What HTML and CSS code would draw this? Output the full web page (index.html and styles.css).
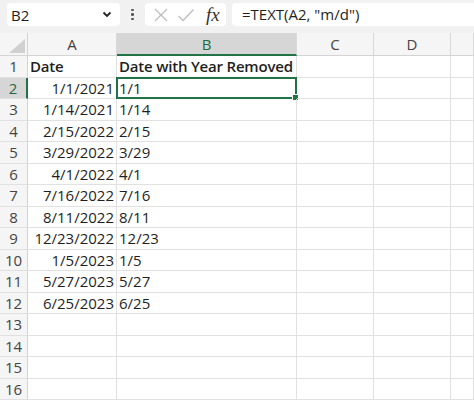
FILE: index.html
```html
<!DOCTYPE html>
<html lang="en">
<head>
  <meta charset="UTF-8">
  <title>Date with Year Removed</title>
  <link rel="stylesheet" href="styles.css">
</head>
<body>
  <div class="toolbar">
    <div class="name-box">
      <span>B2</span>
      <svg class="chevron" width="10" height="7" viewBox="0 0 10 7"><path d="M1.5 1.5 L5 5 L8.5 1.5" fill="none" stroke="#222" stroke-width="1.8"/></svg>
    </div>
    <div class="dots"><i></i><i></i><i></i></div>
    <div class="fx-box">
      <svg width="16" height="16" viewBox="0 0 16 16"><path d="M2 2 L14 14 M14 2 L2 14" stroke="#bdbdbd" stroke-width="1.3" fill="none"/></svg>
      <svg width="18" height="16" viewBox="0 0 18 16"><path d="M1.5 9 L6 13.5 L16.5 2.5" stroke="#bdbdbd" stroke-width="1.3" fill="none"/></svg>
      <span class="fx">fx</span>
    </div>
    <div class="formula">=TEXT(A2, "m/d")</div>
  </div>

  <div class="sheet">
    <div class="corner"><svg width="22" height="18" viewBox="0 0 22 18"><path d="M20 2 L20 16 L4 16 Z" fill="#d0d0d0"/></svg></div>
    <div class="col-head">A</div>
    <div class="col-head active">B</div>
    <div class="col-head">C</div>
    <div class="col-head">D</div>
    <div class="col-head"></div>

    <div class="row-head">1</div>
    <div class="cell bold">Date</div>
    <div class="cell bold">Date with Year Removed</div>
    <div class="cell"></div><div class="cell"></div><div class="cell"></div>

    <div class="row-head active">2</div>
    <div class="cell num">1/1/2021</div>
    <div class="cell selected">1/1<span class="handle"></span></div>
    <div class="cell"></div><div class="cell"></div><div class="cell"></div>

    <div class="row-head">3</div>
    <div class="cell num">1/14/2021</div>
    <div class="cell">1/14</div>
    <div class="cell"></div><div class="cell"></div><div class="cell"></div>

    <div class="row-head">4</div>
    <div class="cell num">2/15/2022</div>
    <div class="cell">2/15</div>
    <div class="cell"></div><div class="cell"></div><div class="cell"></div>

    <div class="row-head">5</div>
    <div class="cell num">3/29/2022</div>
    <div class="cell">3/29</div>
    <div class="cell"></div><div class="cell"></div><div class="cell"></div>

    <div class="row-head">6</div>
    <div class="cell num">4/1/2022</div>
    <div class="cell">4/1</div>
    <div class="cell"></div><div class="cell"></div><div class="cell"></div>

    <div class="row-head">7</div>
    <div class="cell num">7/16/2022</div>
    <div class="cell">7/16</div>
    <div class="cell"></div><div class="cell"></div><div class="cell"></div>

    <div class="row-head">8</div>
    <div class="cell num">8/11/2022</div>
    <div class="cell">8/11</div>
    <div class="cell"></div><div class="cell"></div><div class="cell"></div>

    <div class="row-head">9</div>
    <div class="cell num">12/23/2022</div>
    <div class="cell">12/23</div>
    <div class="cell"></div><div class="cell"></div><div class="cell"></div>

    <div class="row-head">10</div>
    <div class="cell num">1/5/2023</div>
    <div class="cell">1/5</div>
    <div class="cell"></div><div class="cell"></div><div class="cell"></div>

    <div class="row-head">11</div>
    <div class="cell num">5/27/2023</div>
    <div class="cell">5/27</div>
    <div class="cell"></div><div class="cell"></div><div class="cell"></div>

    <div class="row-head">12</div>
    <div class="cell num">6/25/2023</div>
    <div class="cell">6/25</div>
    <div class="cell"></div><div class="cell"></div><div class="cell"></div>

    <div class="row-head">13</div>
    <div class="cell"></div><div class="cell"></div><div class="cell"></div><div class="cell"></div><div class="cell"></div>
    <div class="row-head">14</div>
    <div class="cell"></div><div class="cell"></div><div class="cell"></div><div class="cell"></div><div class="cell"></div>
    <div class="row-head">15</div>
    <div class="cell"></div><div class="cell"></div><div class="cell"></div><div class="cell"></div><div class="cell"></div>
    <div class="row-head">16</div>
    <div class="cell"></div><div class="cell"></div><div class="cell"></div><div class="cell"></div><div class="cell"></div>
  </div>
</body>
</html>
```

FILE: styles.css
```css
body {
  margin: 0;
  padding: 0;
  background-color: white;
  font-family: "Open Sans", "Noto Sans", sans-serif;
  color: #1f1f1f;
  overflow: hidden;
}
.toolbar {
  background-color: #f1f1f1;
  height: 33px;
  display: flex;
  align-items: flex-start;
  padding-top: 3px;
  box-sizing: border-box;
}
.name-box {
  margin-left: 7px;
  width: 113px;
  height: 23px;
  background-color: white;
  border-radius: 4px;
  display: flex;
  align-items: center;
  justify-content: space-between;
  padding: 0 8px 0 4px;
  box-sizing: border-box;
  font-size: 15px;
}
.dots {
  width: 25px;
  height: 23px;
  display: flex;
  flex-direction: column;
  align-items: center;
  justify-content: center;
  gap: 2px;
}
.dots i {
  width: 2.5px;
  height: 2.5px;
  background-color: #555;
  border-radius: 50%;
}
.fx-box {
  width: 81px;
  height: 23px;
  background-color: white;
  border-radius: 4px;
  display: flex;
  align-items: center;
  gap: 8px;
  padding-left: 8px;
  box-sizing: border-box;
}
.fx {
  font-family: "Liberation Serif", serif;
  font-style: italic;
  font-size: 19px;
  color: #333;
  margin-left: 3px;
}
.formula {
  margin-left: 6px;
  flex: 1;
  height: 23px;
  background-color: white;
  border-radius: 4px 0 0 4px;
  font-size: 15px;
  line-height: 23px;
  padding-left: 10px;
}
.sheet {
  display: grid;
  grid-template-columns: 28px 89px 180px 77px 77px 1fr;
  grid-template-rows: 23px repeat(16, 21.5px);
}
.corner {
  background-color: #f5f5f5;
  border-right: 1px solid #d4d4d4;
  border-bottom: 1px solid #d4d4d4;
  display: flex;
  align-items: flex-end;
  justify-content: flex-end;
  box-sizing: border-box;
}
.col-head {
  background-color: #f5f5f5;
  border-right: 1px solid #dadada;
  border-bottom: 1px solid #d4d4d4;
  box-sizing: border-box;
  text-align: center;
  font-size: 15px;
  line-height: 22px;
  color: #444;
}
.col-head.active {
  background-color: #d6d6d6;
  border-bottom: 2px solid #217346;
  color: #1d6b40;
}
.row-head {
  background-color: #f5f5f5;
  border-right: 1px solid #d4d4d4;
  border-bottom: 1px solid #e1e1e1;
  box-sizing: border-box;
  text-align: center;
  font-size: 15px;
  line-height: 21px;
  color: #444;
}
.row-head.active {
  background-color: #d6d6d6;
  border-right: 2px solid #217346;
  color: #1d6b40;
}
.cell {
  border-right: 1px solid #e1e1e1;
  border-bottom: 1px solid #e1e1e1;
  box-sizing: border-box;
  font-size: 15px;
  line-height: 21px;
  padding: 0 2px;
  white-space: nowrap;
  position: relative;
}
.cell.num {
  text-align: right;
}
.cell.bold {
  font-weight: 600;
  letter-spacing: -0.2px;
}
.cell.selected {
  border: 2px solid #217346;
  line-height: 18px;
  margin: -1px 0 0 -1px;
  padding-left: 1px;
}
.handle {
  position: absolute;
  right: -4px;
  bottom: -4px;
  width: 5px;
  height: 5px;
  background-color: #217346;
  border: 1px solid white;
}
```
